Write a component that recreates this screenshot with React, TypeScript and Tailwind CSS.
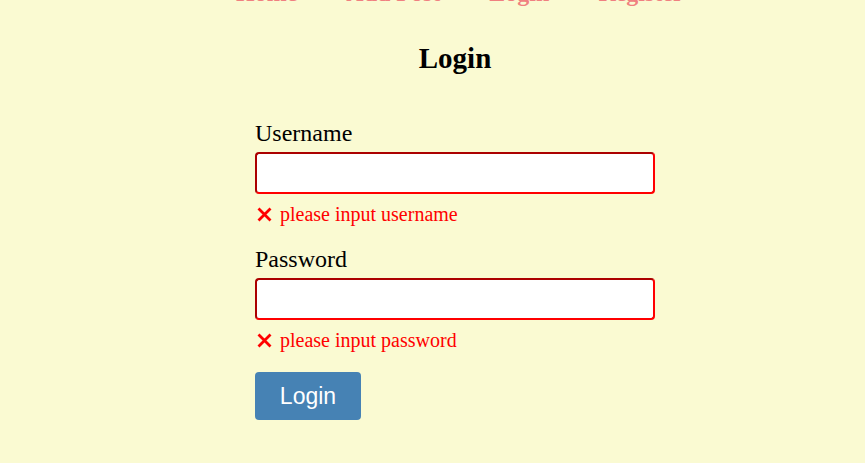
import React from "react";

const serif = "font-['Liberation_Serif','Times_New_Roman',serif]";

function ErrorLine({ text }: { text: string }) {
  return (
    <div className="mt-[8px] flex items-center h-[24px] text-[20px] leading-[24px] text-[#ff0000]">
      <svg
        width="15"
        height="15"
        viewBox="0 0 15 15"
        className="ml-[2px] mr-[8px] mt-[1px] shrink-0"
      >
        <path
          d="M1.5 1.5L13.5 13.5M13.5 1.5L1.5 13.5"
          stroke="#ff0000"
          strokeWidth="2.8"
          strokeLinecap="butt"
        />
      </svg>
      <span>{text}</span>
    </div>
  );
}

function Field({ label, error, type }: { label: string; error: string; type: string }) {
  return (
    <div>
      <label className="block text-[24px] leading-[28px] text-black">{label}</label>
      <input
        type={type}
        className="mt-[5px] block w-[400px] h-[42px] bg-white rounded-[4px] border-2 [border-style:inset] border-[#ff0000] outline-none px-2"
      />
      <ErrorLine text={error} />
    </div>
  );
}

export default function App() {
  return (
    <div className={`min-h-[463px] w-full bg-[#fafad2] overflow-hidden ${serif}`}>
      {/* nav, scrolled partly off the top */}
      <nav className="mt-[-20px] ml-[236px] flex gap-[49px] text-[24px] leading-[27px] font-bold text-[#f08080]">
        <span>Home</span>
        <span>Add Post</span>
        <span>Login</span>
        <span>Register</span>
      </nav>

      <div className="ml-[255px] w-[400px]">
        <h2 className="mt-[34px] text-center text-[29px] leading-[34px] font-bold text-black">
          Login
        </h2>

        <form className="mt-[44px]" onSubmit={(e) => e.preventDefault()}>
          <Field label="Username" error="please input username" type="text" />
          <div className="mt-[19px]">
            <Field label="Password" error="please input password" type="password" />
          </div>
          <button
            type="submit"
            className="mt-[20px] w-[106px] h-[48px] rounded-[4px] bg-[#4682b4] text-white text-[23px] font-['Liberation_Sans',Arial,sans-serif]"
          >
            Login
          </button>
        </form>
      </div>
    </div>
  );
}
